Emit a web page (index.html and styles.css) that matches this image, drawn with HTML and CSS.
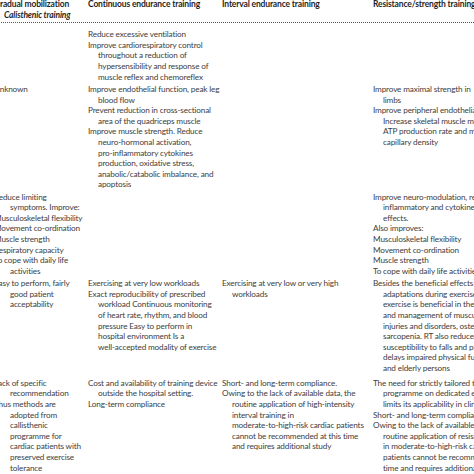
FILE: index.html
```html
<!DOCTYPE html>
<html>
<head>
<meta charset="utf-8">
<link rel="stylesheet" href="styles.css">
</head>
<body>
<div class="table">
  <div class="row head">
    <div class="cell"><div class="it">Gradual mobilization<br><em>Calisthenic training</em></div></div>
    <div class="cell">Continuous endurance training</div>
    <div class="cell">Interval endurance training</div>
    <div class="cell">Resistance/strength training</div>
  </div>

  <div class="row body first">
    <div class="cell"></div>
    <div class="cell">
      <div class="it">Reduce excessive ventilation</div>
      <div class="it">Improve cardiorespiratory control<br>throughout a reduction of<br>hypersensibility and response of<br>muscle reflex and chemoreflex</div>
    </div>
    <div class="cell"></div>
    <div class="cell"></div>
  </div>

  <div class="row body">
    <div class="cell"><div class="it wide">Unknown</div></div>
    <div class="cell">
      <div class="it">Improve endothelial function, peak leg<br>blood flow</div>
      <div class="it">Prevent reduction in cross-sectional<br>area of the quadriceps muscle</div>
      <div class="it">Improve muscle strength. Reduce<br>neuro-hormonal activation,<br>pro-inflammatory cytokines<br>production, oxidative stress,<br>anabolic/catabolic imbalance, and<br>apoptosis</div>
    </div>
    <div class="cell"></div>
    <div class="cell">
      <div class="it">Improve maximal strength in<br>limbs</div>
      <div class="it">Improve peripheral endothelial<br>Increase skeletal muscle mitoch<br>ATP production rate and musc<br>capillary density</div>
    </div>
  </div>

  <div class="row body">
    <div class="cell">
      <div class="it wide">Reduce limiting<br>symptoms. Improve:</div>
      <div class="it wide">Musculoskeletal flexibility</div>
      <div class="it wide">Movement co-ordination</div>
      <div class="it wide">Muscle strength</div>
      <div class="it wide">Respiratory capacity</div>
      <div class="it wide">To cope with daily life<br>activities</div>
    </div>
    <div class="cell"></div>
    <div class="cell"></div>
    <div class="cell">
      <div class="it">Improve neuro-modulation, reduce<br>inflammatory and cytokines<br>effects.</div>
      <div class="it">Also improves:</div>
      <div class="it">Musculoskeletal flexibility</div>
      <div class="it">Movement co-ordination</div>
      <div class="it">Muscle strength</div>
      <div class="it">To cope with daily life activities</div>
    </div>
  </div>

  <div class="row body">
    <div class="cell">
      <div class="it wide">Easy to perform, fairly<br>good patient<br>acceptability</div>
    </div>
    <div class="cell">
      <div class="it">Exercising at very low workloads</div>
      <div class="it">Exact reproducibility of prescribed<br>workload Continuous monitoring<br>of heart rate, rhythm, and blood<br>pressure Easy to perform in<br>hospital environment Is a<br>well-accepted modality of exercise</div>
    </div>
    <div class="cell">
      <div class="it">Exercising at very low or very high<br>workloads</div>
    </div>
    <div class="cell">
      <div class="it">Besides the beneficial effects of<br>adaptations during exercise, RT<br>exercise is beneficial in the prev<br>and management of musculos<br>injuries and disorders, osteopo<br>sarcopenia. RT also reduces<br>susceptibility to falls and prob<br>delays impaired physical func<br>and elderly persons</div>
    </div>
  </div>

  <div class="row body last">
    <div class="cell">
      <div class="it wide">Lack of specific<br>recommendation</div>
      <div class="it wide">Thus methods are<br>adopted from<br>callisthenic<br>programme for<br>cardiac patients with<br>preserved exercise<br>tolerance</div>
    </div>
    <div class="cell">
      <div class="it">Cost and availability of training device<br>outside the hospital setting.</div>
      <div class="it">Long-term compliance</div>
    </div>
    <div class="cell">
      <div class="it">Short- and long-term compliance.</div>
      <div class="it">Owing to the lack of available data, the<br>routine application of high-intensity<br>interval training in<br>moderate-to-high-risk cardiac patients<br>cannot be recommended at this time<br>and requires additional study</div>
    </div>
    <div class="cell">
      <div class="it">The need for strictly tailored tra<br>programme on dedicated equi<br>limits its applicability in clinic</div>
      <div class="it">Short- and long-term complianc</div>
      <div class="it">Owing to the lack of available da<br>routine application of resistan<br>in moderate-to-high-risk cardi<br>patients cannot be recommend<br>time and requires additional s</div>
    </div>
  </div>
</div>
</body>
</html>
```

FILE: styles.css
```css
html, body {
  margin: 0;
  padding: 0;
  width: 474px;
  height: 474px;
  overflow: hidden;
  background: #ffffff;
}

body {
  font-family: Lato, "Open Sans", sans-serif;
  font-size: 8.2px;
  line-height: 10.6px;
  letter-spacing: -0.15px;
  color: #404040;
}

.table {
  margin-left: -6px;
  width: 520px;
}

.row {
  display: grid;
  grid-template-columns: 94px 134px 151px 141px;
}

.head {
  margin-top: -1px;
  padding-bottom: 2px;
  border-bottom: 1px dotted #555555;
  font-weight: 700;
  font-size: 8.5px;
  color: #1f1f1f;
}

.head em {
  font-style: italic;
}

.body {
  padding-bottom: 1.8px;
}

.body.first {
  padding-top: 6px;
}

.body.last {
  padding-top: 2.5px;
}

.cell {
  white-space: nowrap;
}

.it {
  padding-left: 10px;
  text-indent: -10px;
}

.it.wide {
  padding-left: 16px;
  text-indent: -16px;
}
```
